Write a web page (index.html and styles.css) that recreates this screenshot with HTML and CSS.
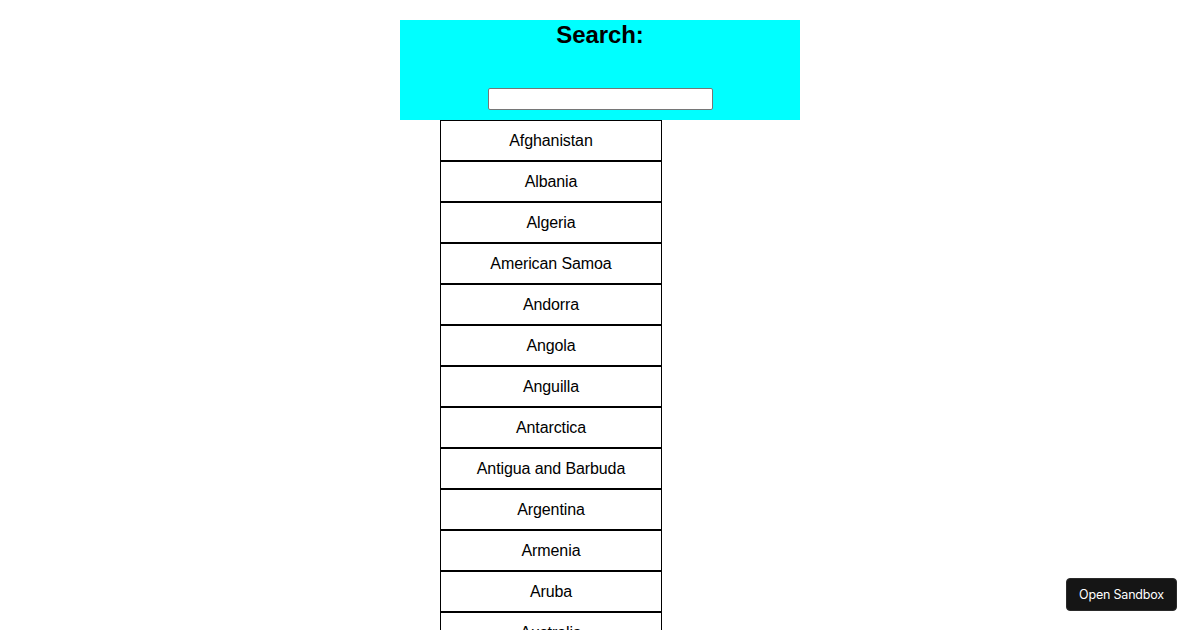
FILE: index.html
```html
<!DOCTYPE html>
<html>
<head>
<meta charset="utf-8">
<link rel="stylesheet" href="styles.css">
</head>
<body>
<div class="app">
  <div class="search-box">
    <h2 class="title">Search:</h2>
    <input class="search-input" type="text">
  </div>
  <ul class="list">
    <li class="item">Afghanistan</li>
    <li class="item">Albania</li>
    <li class="item">Algeria</li>
    <li class="item">American Samoa</li>
    <li class="item">Andorra</li>
    <li class="item">Angola</li>
    <li class="item">Anguilla</li>
    <li class="item">Antarctica</li>
    <li class="item">Antigua and Barbuda</li>
    <li class="item">Argentina</li>
    <li class="item">Armenia</li>
    <li class="item">Aruba</li>
    <li class="item">Australia</li>
    <li class="item">Austria</li>
  </ul>
</div>
<button class="sandbox-btn">Open Sandbox</button>
</body>
</html>
```
FILE: styles.css
```css
html, body {
  margin: 0;
  padding: 0;
  background: #fff;
  overflow: hidden;
}
body {
  font-family: "Liberation Sans", Arial, sans-serif;
  color: #000;
}
.app {
  width: 400px;
  margin: 20px auto 0;
}
.search-box {
  background: #00ffff;
  height: 100px;
  box-sizing: border-box;
  display: flex;
  flex-direction: column;
  align-items: center;
}
.title {
  margin: 0;
  padding-top: 1px;
  font-size: 24px;
  font-weight: bold;
  line-height: 28px;
  letter-spacing: -0.1px;
}
.search-input {
  margin-top: 39px;
  width: 225px;
  height: 22px;
  box-sizing: border-box;
  border: 1px solid #767676;
  border-radius: 2px;
  background: #fff;
  padding: 1px 2px;
  outline: none;
}
.list {
  list-style: none;
  margin: 0;
  padding: 0 0 0 40px;
}
.item {
  width: 222px;
  height: 41px;
  box-sizing: border-box;
  border: 1px solid #000;
  display: flex;
  align-items: center;
  justify-content: center;
  font-size: 16px;
  letter-spacing: -0.1px;
}
.sandbox-btn {
  position: fixed;
  right: 23px;
  bottom: 19px;
  width: 111px;
  height: 33px;
  background: #151515;
  color: #fff;
  border: 1px solid #2a2a2a;
  border-radius: 4px;
  font-family: Inter, "Liberation Sans", sans-serif;
  font-size: 12.5px;
  letter-spacing: -0.2px;
  padding: 0;
}
```
